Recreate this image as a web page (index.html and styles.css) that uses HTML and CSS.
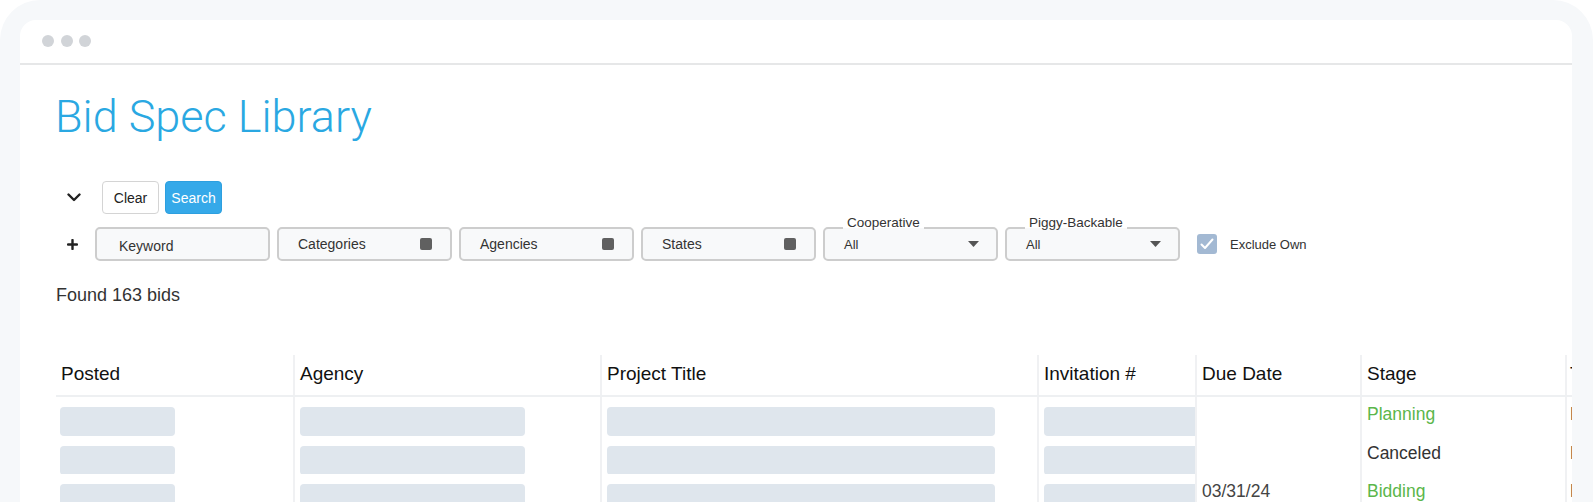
FILE: index.html
```html
<!DOCTYPE html>
<html lang="en">
<head>
    <meta charset="UTF-8">
    <meta name="viewport" content="width=device-width, initial-scale=1.0">
    <title>Bid Spec Library</title>
    <link rel="stylesheet" href="styles.css">
</head>
<body>

<div class="frame">
    <div class="window">
        <!-- Window chrome -->
        <div class="titlebar">
            <span class="dot"></span>
            <span class="dot"></span>
            <span class="dot"></span>
        </div>

        <div class="page">
            <h1 class="page-title">Bid Spec Library</h1>

            <div class="toolbar">
                <span class="row-icon">
                    <svg width="14" height="9" viewBox="0 0 14 9"><polyline points="1.5,1.5 7,7 12.5,1.5" fill="none" stroke="#222" stroke-width="2.4" stroke-linecap="round" stroke-linejoin="round"/></svg>
                </span>
                <button class="btn">Clear</button>
                <button class="btn btn-primary">Search</button>
            </div>

            <div class="filters">
                <span class="row-icon">
                    <svg width="11" height="11" viewBox="0 0 11 11"><path d="M5.5 1v9M1 5.5h9" stroke="#222" stroke-width="2.4" stroke-linecap="round"/></svg>
                </span>
                <div class="field field-input">Keyword</div>
                <div class="field">Categories <span class="field-square"></span></div>
                <div class="field">Agencies <span class="field-square"></span></div>
                <div class="field">States <span class="field-square"></span></div>
                <div class="field field-select">
                    <span class="field-label">Cooperative</span>
                    All
                    <svg class="caret" width="11" height="6" viewBox="0 0 11 6"><polygon points="0,0 11,0 5.5,6" fill="#555"/></svg>
                </div>
                <div class="field field-select">
                    <span class="field-label">Piggy-Backable</span>
                    All
                    <svg class="caret" width="11" height="6" viewBox="0 0 11 6"><polygon points="0,0 11,0 5.5,6" fill="#555"/></svg>
                </div>
                <label class="check">
                    <span class="check-box">
                        <svg width="14" height="12" viewBox="0 0 14 12"><polyline points="1.5,6.5 5,10 12.5,1.5" fill="none" stroke="#fff" stroke-width="2" stroke-linecap="round" stroke-linejoin="round"/></svg>
                    </span>
                    Exclude Own
                </label>
            </div>

            <p class="found">Found 163 bids</p>

            <div class="bids">
                <div class="bids-row bids-head">
                    <div class="cell">Posted</div>
                    <div class="cell">Agency</div>
                    <div class="cell">Project Title</div>
                    <div class="cell">Invitation #</div>
                    <div class="cell">Due Date</div>
                    <div class="cell">Stage</div>
                    <div class="cell">Type</div>
                </div>
                <div class="bids-row">
                    <div class="cell"><div class="skel skel-posted"></div></div>
                    <div class="cell"><div class="skel skel-agency"></div></div>
                    <div class="cell"><div class="skel skel-title"></div></div>
                    <div class="cell"><div class="skel skel-inv"></div></div>
                    <div class="cell cell-date"></div>
                    <div class="cell stage-open">Planning</div>
                    <div class="cell">RFP</div>
                </div>
                <div class="bids-row">
                    <div class="cell"><div class="skel skel-posted"></div></div>
                    <div class="cell"><div class="skel skel-agency"></div></div>
                    <div class="cell"><div class="skel skel-title"></div></div>
                    <div class="cell"><div class="skel skel-inv"></div></div>
                    <div class="cell cell-date"></div>
                    <div class="cell">Canceled</div>
                    <div class="cell">RFP</div>
                </div>
                <div class="bids-row">
                    <div class="cell"><div class="skel skel-posted"></div></div>
                    <div class="cell"><div class="skel skel-agency"></div></div>
                    <div class="cell"><div class="skel skel-title"></div></div>
                    <div class="cell"><div class="skel skel-inv"></div></div>
                    <div class="cell cell-date">03/31/24</div>
                    <div class="cell stage-open">Bidding</div>
                    <div class="cell">Bid</div>
                </div>
            </div>
        </div>
    </div>
</div>

</body>
</html>
```

FILE: styles.css
```css
body, html {
    margin: 0;
    padding: 0;
    width: 100%;
    height: 100%;
    overflow: hidden;
    background-color: #fff;
    font-family: "Liberation Sans", Arial, sans-serif;
    color: #333;
}

.frame {
    box-sizing: border-box;
    height: 100%;
    padding: 20px 21px 0 20px;
    background-color: #f6f8fa;
    border-radius: 40px 40px 0 0;
}

.window {
    height: 100%;
    background-color: #fff;
    border-radius: 16px 16px 0 0;
    overflow: hidden;
}

/* Window chrome */
.titlebar {
    box-sizing: border-box;
    height: 45px;
    padding: 15px 0 0 22px;
    display: flex;
    gap: 6.5px;
    border-bottom: 2px solid #e6e7e8;
}

.dot {
    width: 12px;
    height: 12px;
    border-radius: 50%;
    background-color: #d1d4d8;
}

.page {
    padding-left: 36px;
}

.page-title {
    margin: 26px 0 0 -1px;
    font-family: Roboto, Inter, sans-serif;
    font-weight: 300;
    font-size: 45px;
    line-height: 52px;
    color: #2aa8e2;
}

.row-icon {
    width: 32px;
    flex-shrink: 0;
    display: flex;
    align-items: center;
    padding-left: 11px;
    box-sizing: border-box;
}

/* Search buttons */
.toolbar {
    margin-top: 38px;
    display: flex;
    align-items: center;
    gap: 6px;
}

.toolbar .btn:first-of-type {
    margin-left: 8px;
}

.btn {
    width: 57px;
    height: 33px;
    padding: 0;
    border: 1px solid #d4d4d4;
    border-radius: 4px;
    background-color: #fff;
    font-family: "Liberation Sans", Arial, sans-serif;
    font-size: 14px;
    color: #222;
}

.btn-primary {
    background-color: #35a9e9;
    border-color: #2d9fdf;
    color: #fff;
}

/* Filter fields */
.filters {
    margin-top: 13px;
    display: flex;
    align-items: center;
    gap: 7px;
}

.field {
    position: relative;
    box-sizing: border-box;
    width: 175px;
    height: 34px;
    padding: 0 18px 0 19px;
    display: flex;
    align-items: center;
    justify-content: space-between;
    border: 2px solid #cdcdcd;
    border-radius: 5px;
    background-color: #f8f9fa;
    font-size: 14px;
    color: #333;
}

.field-input {
    padding: 4px 0 0 22px;
    justify-content: flex-start;
}

.field-square {
    width: 12px;
    height: 12px;
    border-radius: 2px;
    background-color: #606060;
}

.field-select {
    font-size: 13px;
    padding-right: 17px;
}

.field-label {
    position: absolute;
    top: -14px;
    left: 18px;
    padding: 0 4px;
    font-size: 13.5px;
    line-height: 16px;
    color: #333;
    background: linear-gradient(#fff 13px, #f8f9fa 13px);
}

.check {
    margin-left: 10px;
    display: flex;
    align-items: center;
    gap: 13px;
    font-size: 13px;
    color: #333;
}

.check-box {
    width: 20px;
    height: 20px;
    border-radius: 3px;
    background-color: #a3b9d3;
    display: flex;
    align-items: center;
    justify-content: center;
}

.found {
    margin: 23px 0 0;
    font-size: 18px;
    line-height: 22px;
    color: #333;
}

/* Results table */
.bids {
    margin-top: 49px;
}

.bids-row {
    display: grid;
    grid-template-columns: 237px 307px 437px 158px 165px 205px 120px;
    height: 38.5px;
}

.cell {
    box-sizing: border-box;
    padding: 7px 5px 0;
    border-left: 2px solid #f0f1f3;
    overflow: hidden;
    white-space: nowrap;
    font-size: 17.5px;
    line-height: 20px;
    color: #333;
}

.cell:first-child {
    border-left: none;
}

.cell:last-child {
    padding-left: 3px;
}

.bids-head {
    height: 40px;
    border-bottom: 2px solid #eef0f2;
}

.bids-head .cell {
    padding-top: 8px;
    font-size: 19px;
    line-height: 22px;
    color: #111;
}

.cell-date {
    color: #444;
}

.stage-open {
    color: #5ab64a;
}

.skel {
    height: 29px;
    margin-top: 3px;
    border-radius: 4px;
    background-color: #dfe6ed;
}

.skel-posted { width: 115px; margin-left: -1px; }
.skel-agency { width: 225px; }
.skel-title { width: 388px; }
.skel-inv { width: 200px; }
```
